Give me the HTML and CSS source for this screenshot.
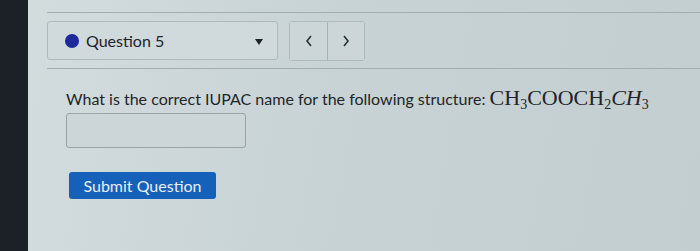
FILE: index.html
```html
<!DOCTYPE html>
<html>
<head>
<meta charset="utf-8">
<link rel="stylesheet" href="styles.css">
</head>
<body>
<div class="screen">
  <div class="bezel"></div>
  <div class="page">
    <div class="toolbar">
      <div class="select">
        <span class="dot"></span>
        <span class="qlabel">Question 5</span>
        <span class="caret"></span>
      </div>
      <div class="nav">
        <button class="navbtn" aria-label="Previous"><svg width="8" height="12" viewBox="0 0 8 12"><polyline points="6,1 2,6 6,11" fill="none" stroke="#2a3236" stroke-width="1.6"/></svg></button>
        <button class="navbtn" aria-label="Next"><svg width="8" height="12" viewBox="0 0 8 12"><polyline points="2,1 6,6 2,11" fill="none" stroke="#2a3236" stroke-width="1.6"/></svg></button>
      </div>
    </div>
    <div class="content">
      <p class="question">What is the correct IUPAC name for the following structure: <span class="chem">CH<sub>3</sub>COOCH<sub>2</sub><i>CH</i><sub>3</sub></span></p>
      <div class="answer"></div>
      <button class="submit">Submit Question</button>
    </div>
  </div>
</div>
</body>
</html>
```
FILE: styles.css
```css
html, body { margin: 0; padding: 0; }
body { width: 700px; height: 251px; overflow: hidden; font-family: Lato, "Open Sans", sans-serif; }
.screen { display: flex; height: 251px; }
.bezel { width: 28px; background: #1b2126; flex: none; }
.page {
  flex: 1;
  background: linear-gradient(100deg, #d3dcdd 0%, #c8d3d6 45%, #c3ced1 100%);
  padding-top: 12px;
}
.toolbar {
  margin-left: 19px;
  border-top: 1px solid #a4aeb0;
  border-bottom: 1px solid #a4aeb0;
  height: 55px;
  display: flex;
  align-items: center;
  gap: 10px;
}
.select {
  width: 231px; height: 39px;
  border: 1px solid #b0b9bb;
  border-radius: 3px;
  display: flex; align-items: center;
  box-sizing: border-box;
  padding-left: 17px; padding-right: 14px;
  background: #d0d9db;
}
.dot { width: 14px; height: 14px; border-radius: 50%; background: #1e2a9c; margin-right: 7px; }
.qlabel { font-size: 16px; color: #1d2326; flex: 1; }
.caret { width: 0; height: 0; border-left: 4.5px solid transparent; border-right: 4.5px solid transparent; border-top: 6px solid #1d2326; margin-top: 2px; }
.nav { display: flex; border: 1px solid #b0b9bb; border-radius: 3px; height: 40px; box-sizing: border-box; margin-left: 1px; }
.navbtn {
  width: 37px; background: #ccd5d7; border: none; padding: 0;
  display: flex; align-items: center; justify-content: center;
}
.navbtn + .navbtn { border-left: 1px solid #a8b2b4; }
.content { padding-left: 38px; }
.question { margin: 16px 0 0; font-size: 16px; color: #1f2528; height: 25px; white-space: nowrap; }
.chem { font-family: "Liberation Serif", serif; font-size: 22px; }
.chem sub { font-size: 14px; vertical-align: -4px; line-height: 0; }
.answer {
  width: 180px; height: 35px; box-sizing: border-box;
  border: 1px solid #9aa4a6; border-radius: 3px; margin-top: 3px;
  background: #ccd6d8;
}
.submit {
  margin-top: 24px; margin-left: 3px;
  width: 147px; height: 27px;
  background: #1561b9; color: #e8eef5;
  border: none; border-radius: 3px;
  font: 16px Lato, sans-serif;
  padding: 0;
}
```
